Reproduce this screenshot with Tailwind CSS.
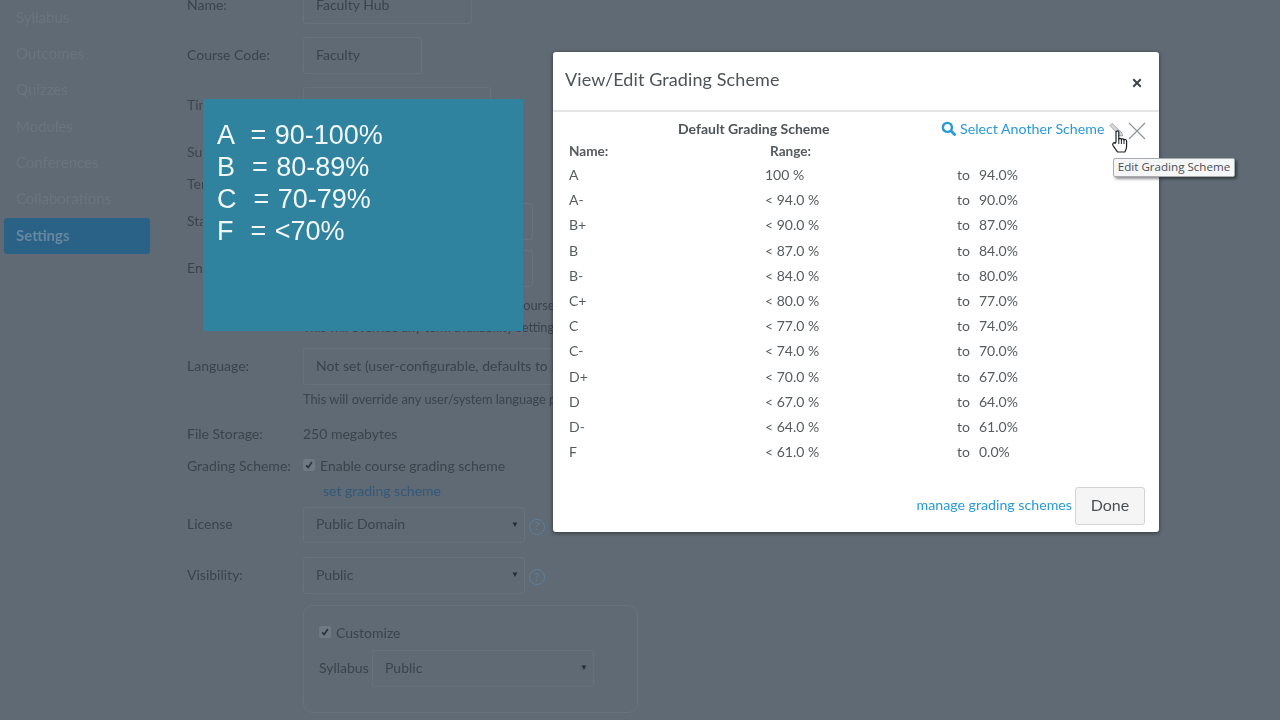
<!DOCTYPE html>
<html>
<head>
<meta charset="utf-8">
<script src="https://cdn.jsdelivr.net/npm/@tailwindcss/browser@4"></script>
</head>
<body class="m-0">
<div class="relative w-[1280px] h-[720px] overflow-hidden bg-[#5f6a74] font-['Lato','Open_Sans',sans-serif] text-[14px] text-[#3a444c]">
  <!-- page behind -->
  <div class="flex h-full blur-[0.5px]">
    <nav class="w-[187px] shrink-0 pl-1 flex flex-col text-[15px] text-[#69747e]">
      <div class="h-[36.3px] mt-[-1px] pl-3 flex items-center">Syllabus</div>
      <div class="h-[36.3px] pl-3 flex items-center">Outcomes</div>
      <div class="h-[36.3px] pl-3 flex items-center">Quizzes</div>
      <div class="h-[36.3px] pl-3 flex items-center">Modules</div>
      <div class="h-[36.3px] pl-3 flex items-center">Conferences</div>
      <div class="h-[36.3px] pl-3 flex items-center">Collaborations</div>
      <div class="h-[36px] w-[146px] mt-[1px] pl-3 pb-[2px] flex items-center rounded-[3px] bg-[#2a6186] font-bold text-[#66879f]">Settings</div>
    </nav>
    <main class="flex-1 flex flex-col -mt-[13px] text-[14px]">
      <div class="flex items-center h-[37px]"><span class="w-[116px] mb-[2px]">Name:</span><div class="w-[169px] h-full pb-[2px] border border-[#67727c] rounded-[3px] pl-3 flex items-center">Faculty Hub</div></div>
      <div class="flex items-center h-[37px] mt-[13px]"><span class="w-[116px] mb-[2px]">Course Code:</span><div class="w-[119px] h-full pb-[2px] border border-[#67727c] rounded-[3px] pl-3 flex items-center">Faculty</div></div>
      <div class="flex items-center h-[37px] mt-[13px]"><span class="w-[116px] mb-[2px]">Time Zone:</span><div class="w-[188px] h-full border border-[#67727c] rounded-[3px]"></div></div>
      <div class="h-[20px] mt-[18px] pb-[2px] flex items-center">Subaccount:</div>
      <div class="h-[20px] mt-[12px] pb-[2px] flex items-center">Term:</div>
      <div class="flex items-center h-[37px] mt-[9px]"><span class="w-[116px] mb-[2px]">Starts:</span><div class="w-[230px] h-full border border-[#67727c] rounded-[3px]"></div></div>
      <div class="flex items-center h-[37px] mt-[10px]"><span class="w-[116px] mb-[2px]">Ends:</span><div class="w-[230px] h-full border border-[#67727c] rounded-[3px]"></div></div>
      <div class="ml-[129px] mt-[8px] h-[22px] flex items-center text-[12.8px] whitespace-nowrap">Students can only participate in the course between these dates</div>
      <div class="ml-[116px] h-[22px] flex items-center text-[12.8px] whitespace-nowrap">This will override any term availability settings</div>
      <div class="flex items-center h-[37px] mt-[9px]"><span class="w-[116px] mb-[2px]">Language:</span><div class="w-[330px] h-full pb-[2px] border border-[#67727c] rounded-[3px] pl-3 flex items-center whitespace-nowrap overflow-hidden">Not set (user-configurable, defaults to English)</div></div>
      <div class="ml-[116px] h-[20px] mt-[6px] pb-[2px] flex items-center text-[12.8px] whitespace-nowrap">This will override any user/system language preferences</div>
      <div class="flex items-center h-[20px] mt-[13px] pb-[2px]"><span class="w-[116px]">File Storage:</span><span>250 megabytes</span></div>
      <div class="flex items-center h-[20px] mt-[12px] pb-[2px]"><span class="w-[116px]">Grading Scheme:</span>
        <span class="w-[12px] h-[12px] rounded-[2px] bg-[#6e7983] flex items-center justify-center mr-[5px]"><svg viewBox="0 0 12 12" class="w-[10px] h-[10px]"><path d="M2.5 6.5 5 9l4.5-6.5" fill="none" stroke="#2b333a" stroke-width="2"/></svg></span>
        <span>Enable course grading scheme</span></div>
      <div class="ml-[136px] h-[20px] mt-[5px] pb-[2px] flex items-center text-[#33597a]">set grading scheme</div>
      <div class="flex items-center h-[36px] mt-[6px]"><span class="w-[116px] mb-[3px]">License</span><div class="relative w-[222px] h-full pb-[3px] border border-[#67727c] rounded-[3px] pl-3 flex items-center">Public Domain<span class="absolute right-[5px] text-[8px] text-[#252c32]">▼</span></div><span class="ml-[4px] mt-[3px] w-[16px] h-[16px] rounded-full border border-[#5d7f99] flex items-center justify-center text-[11px] text-[#5d7f99]">?</span></div>
      <div class="flex items-center h-[37px] mt-[14px]"><span class="w-[116px] mb-[3px]">Visibility:</span><div class="relative w-[222px] h-full pb-[3px] border border-[#67727c] rounded-[3px] pl-3 flex items-center">Public<span class="absolute right-[5px] text-[8px] text-[#252c32]">▼</span></div><span class="ml-[4px] mt-[3px] w-[16px] h-[16px] rounded-full border border-[#5d7f99] flex items-center justify-center text-[11px] text-[#5d7f99]">?</span></div>
      <div class="ml-[116px] mt-[11px] w-[335px] h-[108px] border border-[#67727c] rounded-[10px] pl-[15px] pt-[16px]">
        <div class="flex items-center h-[20px]"><span class="w-[12px] h-[12px] rounded-[2px] bg-[#6e7983] flex items-center justify-center mr-[5px]"><svg viewBox="0 0 12 12" class="w-[10px] h-[10px]"><path d="M2.5 6.5 5 9l4.5-6.5" fill="none" stroke="#2b333a" stroke-width="2"/></svg></span><span>Customize</span></div>
        <div class="flex items-center h-[37px] mt-[8px]"><span class="w-[53px] mb-[3px]">Syllabus</span><div class="relative w-[222px] h-full pb-[3px] border border-[#67727c] rounded-[3px] pl-3 flex items-center">Public<span class="absolute right-[5px] text-[8px] text-[#252c32]">▼</span></div></div>
      </div>
    </main>
  </div>

  <!-- teal slide overlay -->
  <div class="absolute left-[203px] top-[99px] w-[320px] h-[232px] bg-[#2f839f] pl-[14px] pt-[20px] font-['Liberation_Sans',sans-serif] text-[27px] leading-[32px] [word-spacing:1px] text-[#f2f7f9] whitespace-pre blur-[0.3px]"><div>A  = 90-100%</div><div>B  = 80-89%</div><div>C  = 70-79%</div><div>F  = &lt;70%</div></div>

  <!-- modal -->
  <div class="absolute left-[553px] top-[52px] w-[606px] h-[480px] bg-white rounded-[3px] shadow-[0_1px_4px_rgba(0,0,0,0.5)] text-[#555b60] flex flex-col blur-[0.3px]">
    <div class="h-[60px] shrink-0 border-b-2 border-[#e4e6e8] pl-3 pr-4 pb-[3px] flex items-center justify-between">
      <h2 class="text-[18px] text-[#4c5359] tracking-[0.1px]">View/Edit Grading Scheme</h2>
      <svg viewBox="0 0 12 12" class="w-[10px] h-[10px] mt-[6px] mr-[1px]"><path d="M1.5 1.5 10.5 10.5M10.5 1.5 1.5 10.5" stroke="#3b4249" stroke-width="2.4" fill="none"/></svg>
    </div>
    <div class="relative flex-1 px-4 pt-[5.5px] text-[14px]">
      <div class="flex h-[22px] items-center">
        <span class="w-[109px]"></span>
        <b class="w-[263px] font-bold text-[14px] text-[#4c5359]">Default Grading Scheme</b>
        <svg viewBox="0 0 16 16" class="w-[15px] h-[15px] shrink-0"><circle cx="6.8" cy="6.8" r="4.8" fill="none" stroke="#2a9ad6" stroke-width="2.6"/><path d="M10.5 10.5 14.5 14.5" stroke="#2a9ad6" stroke-width="3" stroke-linecap="round"/></svg>
        <span class="ml-[4px] text-[#2a9ad6] text-[14.2px] whitespace-nowrap">Select Another Scheme</span>
      </div>
      <div class="flex h-[22px] mt-[0.5px] items-center font-bold text-[13.6px]"><span class="w-[201px]">Name:</span><span>Range:</span></div>
      <div class="grid grid-cols-[196px_192px_22px_auto] auto-rows-[25.2px] items-center text-[14px]">
        <span>A</span><span>100 %</span><span>to</span><span>94.0%</span>
        <span>A-</span><span>&lt; 94.0 %</span><span>to</span><span>90.0%</span>
        <span>B+</span><span>&lt; 90.0 %</span><span>to</span><span>87.0%</span>
        <span>B</span><span>&lt; 87.0 %</span><span>to</span><span>84.0%</span>
        <span>B-</span><span>&lt; 84.0 %</span><span>to</span><span>80.0%</span>
        <span>C+</span><span>&lt; 80.0 %</span><span>to</span><span>77.0%</span>
        <span>C</span><span>&lt; 77.0 %</span><span>to</span><span>74.0%</span>
        <span>C-</span><span>&lt; 74.0 %</span><span>to</span><span>70.0%</span>
        <span>D+</span><span>&lt; 70.0 %</span><span>to</span><span>67.0%</span>
        <span>D</span><span>&lt; 67.0 %</span><span>to</span><span>64.0%</span>
        <span>D-</span><span>&lt; 64.0 %</span><span>to</span><span>61.0%</span>
        <span>F</span><span>&lt; 61.0 %</span><span>to</span><span>0.0%</span>
      </div>
      <div class="absolute right-[14px] bottom-[7px] flex items-center">
        <span class="text-[#2a9ad6] text-[14.2px] mr-[3px] mb-[3px]">manage grading schemes</span>
        <span class="w-[70px] h-[38px] pb-[3px] rounded-[3px] border border-[#d2d4d6] bg-[#f5f5f5] flex items-center justify-center text-[16px] text-[#4a5056]">Done</span>
      </div>
    </div>
  </div>

  <!-- close X, pencil, cursor, tooltip float over modal -->
  <svg viewBox="0 0 18 18" class="absolute left-[1128px] top-[122px] w-[18px] h-[18px]"><path d="M1 1 17 17M17 1 1 17" stroke="#8f9498" stroke-width="1.2" fill="none"/></svg>
  <svg viewBox="0 0 16 16" class="absolute left-[1108px] top-[122px] w-[16px] h-[16px]"><path d="M2 3.5 4 1.5 14 11 14.5 14 11.5 13.5Z" fill="#d8dadc" stroke="#a2a6a9" stroke-width="1"/></svg>
  <svg viewBox="0 0 20 26" class="absolute left-[1110px] top-[129px] w-[20px] h-[26px]"><path d="M6 13V3.2C6 1.5 8.8 1.5 8.8 3.2V10.5C8.8 9 11.4 9 11.4 10.8 11.4 9.4 14 9.4 14 11.2 14 10 16.6 10.2 16.6 12V17.5C16.6 20 15.6 21.5 14.8 23H7.5C6.5 21 4.8 19.5 3 16.5 1.8 14.5 4 13 5.2 14.3Z" fill="#fff" stroke="#1b1f22" stroke-width="1.2" stroke-linejoin="round"/><path d="M8.8 10.5V15M11.4 10.8V15M14 11.2V15" stroke="#1b1f22" stroke-width="1" fill="none"/></svg>
  <div class="absolute left-[1113px] top-[158px] w-[122px] h-[19px] pb-[1px] rounded-[2px] bg-[#f5f6f8] border border-[#a9adb1] shadow-[2px_2px_3px_rgba(0,0,0,0.45)] flex items-center justify-center text-[11.6px] text-[#4a4f54] font-['Open_Sans',sans-serif] whitespace-nowrap">Edit Grading Scheme</div>
</div>
</body>
</html>
